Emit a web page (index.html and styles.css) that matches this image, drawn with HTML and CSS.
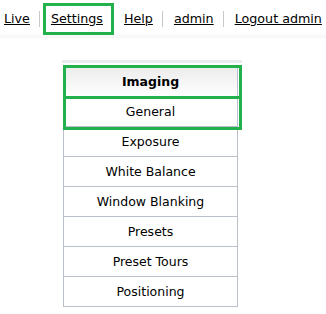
FILE: index.html
```html
<!DOCTYPE html>
<html>
<head>
<meta charset="utf-8">
<link rel="stylesheet" href="styles.css">
</head>
<body>
<div class="nav">
  <a class="link first" href="#">Live</a>
  <span class="sep"></span>
  <a class="link" href="#">Settings</a>
  <span class="sep"></span>
  <a class="link" href="#">Help</a>
  <span class="sep"></span>
  <a class="link" href="#">admin</a>
  <span class="sep"></span>
  <a class="link" href="#">Logout admin</a>
</div>
<div class="main">
  <div class="strip"></div>
  <table class="menu">
    <tr><th>Imaging</th></tr>
    <tr><td>General</td></tr>
    <tr><td>Exposure</td></tr>
    <tr><td>White Balance</td></tr>
    <tr><td>Window Blanking</td></tr>
    <tr><td>Presets</td></tr>
    <tr><td>Preset Tours</td></tr>
    <tr><td>Positioning</td></tr>
  </table>
</div>
<div class="mark mark-settings"></div>
<div class="mark mark-imaging"></div>
<div class="mark mark-general"></div>
</body>
</html>
```
FILE: styles.css
```css
html, body {
  margin: 0;
  padding: 0;
  background: #ffffff;
  font-family: "DejaVu Sans", Verdana, sans-serif;
  color: #000;
}
.nav {
  height: 38px;
  display: flex;
  align-items: center;
  padding-left: 4px;
  white-space: nowrap;
  background: linear-gradient(#ffffff 0, #ffffff 32px, #f6f6f6 38px);
  font-size: 12.7px;
}
.link {
  color: #000;
  text-decoration: underline;
  margin: 0 9px 0 11px;
  line-height: 16px;
  flex: none;
}
.link.first { margin-left: 0; }
.sep {
  flex: none;
  width: 1px;
  height: 16px;
  background: #c8c8c8;
}
.main {
  padding: 22px 0 0 62px;
}
.strip {
  width: 180px;
  height: 3px;
  background: #e9ecf0;
}
.menu {
  margin-top: 3px;
  margin-left: 1px;
  border-collapse: collapse;
  width: 175px;
  font-size: 12.5px;
}
.menu th, .menu td {
  border: 1px solid #b9c0cc;
  height: 29px;
  padding: 0;
  text-align: center;
  vertical-align: middle;
}
.menu th {
  font-weight: bold;
  background: linear-gradient(#ececec, #ffffff);
}
.mark {
  position: absolute;
  box-sizing: border-box;
  border: 3px solid #22b14c;
}
.mark-settings { left: 43px; top: 3px; width: 71px; height: 32px; }
.mark-imaging { left: 63px; top: 65px; width: 179px; height: 34px; }
.mark-general { left: 63px; top: 96px; width: 179px; height: 34px; }
```
